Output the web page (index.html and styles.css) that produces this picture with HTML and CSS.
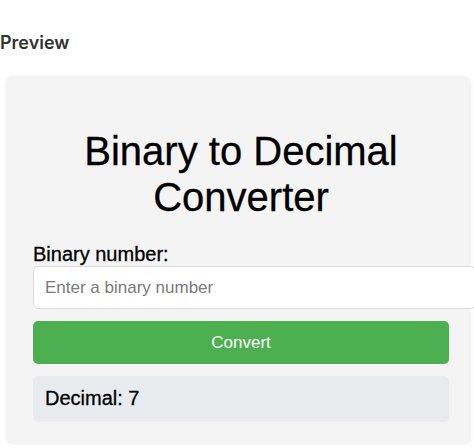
FILE: index.html
```html
<!DOCTYPE html>
<html lang="en">
<head>
<meta charset="utf-8">
<title>Preview</title>
<link rel="stylesheet" href="styles.css">
</head>
<body>
  <div class="page">
    <div class="preview-title">Preview</div>
    <div class="card">
      <h1 class="title">Binary to Decimal Converter</h1>
      <label class="label" for="bin">Binary number:</label>
      <input class="input" id="bin" type="text" placeholder="Enter a binary number">
      <button class="btn" type="button">Convert</button>
      <div class="result">Decimal: 7</div>
    </div>
  </div>
</body>
</html>
```
FILE: styles.css
```css
html, body {
  margin: 0;
  padding: 0;
  background: #ffffff;
  overflow: hidden;
}
.page {
  padding: 32px 0 0 0;
}
.preview-title {
  font-family: Inter, "Noto Sans", sans-serif;
  font-weight: 600;
  font-size: 18px;
  line-height: 22px;
  color: #333333;
  margin: 0 0 22px 0;
}
.card {
  margin-left: 6px;
  width: 465px;
  box-sizing: border-box;
  background: #f4f4f4;
  border-radius: 8px;
  box-shadow: 0 0 4px rgba(0, 0, 0, 0.06);
  padding: 20px 22px 23px 27px;
  font-family: "Liberation Sans", Arial, sans-serif;
}
.title {
  font-family: "Liberation Sans", Arial, sans-serif;
  font-weight: normal;
  font-size: 40px;
  line-height: 46px;
  text-align: center;
  color: #000000;
  margin: 32px 0 23px 0;
  -webkit-text-stroke: 0.3px #000;
}
.label {
  display: block;
  font-size: 20px;
  line-height: 23px;
  color: #000000;
  -webkit-text-stroke: 0.3px #000;
}
.input {
  display: block;
  width: 100%;
  box-sizing: content-box;
  margin: 0;
  padding: 11px 14px 11px 11px;
  border: 1px solid #dcdcdc;
  border-radius: 5px;
  background: #ffffff;
  font-family: "Liberation Sans", Arial, sans-serif;
  font-size: 17px;
  line-height: 19px;
  color: #000;
  outline: none;
}
.input::placeholder {
  color: #7a7a7a;
}
.btn {
  display: block;
  width: 100%;
  margin: 12px 0 0 0;
  padding: 12px 0;
  border: none;
  border-radius: 5px;
  background: #4caf50;
  color: #ffffff;
  font-family: "Liberation Sans", Arial, sans-serif;
  font-size: 17px;
  line-height: 19px;
  cursor: pointer;
}
.result {
  margin-top: 12px;
  padding: 11px 12px 12px 12px;
  background: #e9ecef;
  border-radius: 5px;
  font-size: 20px;
  line-height: 23px;
  color: #000000;
  -webkit-text-stroke: 0.3px #000;
}
```
